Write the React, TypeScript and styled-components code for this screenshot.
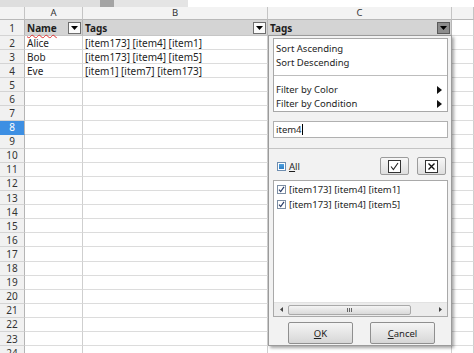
import React from 'react';
import styled, { createGlobalStyle } from 'styled-components';

const Global = createGlobalStyle`
  html, body { margin: 0; padding: 0; background: #fff; overflow: hidden; }
  body { font-family: "Noto Sans", "Open Sans", sans-serif; color: #1e1e1e; }
`;

const COLS = '25px 58px 185px 184px 1fr';
const ROW_H = 14.1;

const Page = styled.div`
  position: relative;
  width: 474px;
  height: 353px;
  overflow: hidden;
  background: #fff;
`;

const TopStrip = styled.div`
  display: flex;
  height: 7px;
`;

const StripSeg = styled.div<{ $w: number; $c: string }>`
  width: ${(p) => p.$w}px;
  background: ${(p) => p.$c};
`;

const Row = styled.div<{ $h: number }>`
  display: grid;
  grid-template-columns: ${COLS};
  height: ${(p) => p.$h}px;
  box-sizing: border-box;
`;

const ColHead = styled.div`
  background: #f3f3f3;
  border-right: 1px solid #c4c4c4;
  border-bottom: 1px solid #b9b9b9;
  font-size: 9.5px;
  color: #333;
  display: flex;
  align-items: center;
  justify-content: center;
  line-height: 1;
`;

const RowNum = styled.div<{ $sel?: boolean }>`
  background: ${(p) => (p.$sel ? '#3d8fe3' : '#f1f1f1')};
  color: ${(p) => (p.$sel ? '#fff' : '#333')};
  border-right: 1px solid #b5b5b5;
  border-bottom: 1px solid ${(p) => (p.$sel ? '#3d8fe3' : '#d4d4d4')};
  font-size: 10px;
  display: flex;
  align-items: center;
  justify-content: center;
  line-height: 1;
`;

const Cell = styled.div`
  border-right: 1px solid #cfcfcf;
  border-bottom: 1px solid #dcdcdc;
  font-size: 10px;
  padding-left: 2px;
  display: flex;
  align-items: center;
  white-space: nowrap;
  overflow: hidden;
  line-height: 1;
`;

const FilterCell = styled.div`
  background: #d4d4d4;
  border-right: 1px solid #b7b7b7;
  border-bottom: 1px solid #c6c6c6;
  font-size: 10px;
  font-weight: bold;
  padding-left: 2px;
  padding-right: 1px;
  display: flex;
  align-items: center;
  justify-content: space-between;
  line-height: 1;
`;

const Spell = styled.span`
  text-decoration: underline wavy #e03030;
  text-decoration-thickness: 1px;
  text-underline-offset: 2px;
`;

const DropBtn = styled.div<{ $on?: boolean }>`
  width: 13px;
  height: 12px;
  box-sizing: border-box;
  border: 1px solid ${(p) => (p.$on ? '#5a5a5a' : '#6e6e6e')};
  background: ${(p) => (p.$on ? '#8c8c8c' : '#fafafa')};
  display: flex;
  align-items: center;
  justify-content: center;
`;

const Popup = styled.div`
  position: absolute;
  left: 268px;
  top: 35px;
  width: 184px;
  height: 311px;
  box-sizing: border-box;
  background: #f2f2f2;
  border: 1px solid #9b9b9b;
  box-shadow: 2px 2px 3px rgba(0, 0, 0, 0.35);
  padding: 2px 3px 0 4px;
  display: flex;
  flex-direction: column;
  font-size: 9.5px;
`;

const MenuBox = styled.div`
  background: #fff;
  border: 1px solid #a8a8a8;
  height: 74px;
  box-sizing: border-box;
  display: flex;
  flex-direction: column;
  padding-top: 2px;
`;

const MenuItem = styled.div`
  height: 15px;
  display: flex;
  align-items: center;
  justify-content: space-between;
  padding: 0 5px 0 2px;
`;

const MenuSep = styled.div`
  height: 1px;
  background: #bdbdbd;
  margin: 6px 0 7px;
`;

const Search = styled.div`
  margin-top: 9px;
  height: 17px;
  box-sizing: border-box;
  background: #fff;
  border: 1px solid #b0b0b0;
  display: flex;
  align-items: center;
  padding-left: 2px;
`;

const Caret = styled.span`
  display: inline-block;
  width: 1px;
  height: 11px;
  background: #000;
`;

const HSep = styled.div`
  height: 1px;
  background: #c4c4c4;
  margin: 10px -3px 0 -4px;
`;

const AllRow = styled.div`
  margin-top: 8px;
  height: 18px;
  display: flex;
  align-items: center;
  gap: 6px;
`;

const AllLabel = styled.label`
  display: flex;
  align-items: center;
  gap: 3px;
  flex: 1;
  padding-left: 4px;
`;

const AllBox = styled.span`
  width: 9px;
  height: 9px;
  box-sizing: border-box;
  border: 1px solid #6f8eb0;
  background: #fff;
  padding: 1px;
  display: inline-flex;
  &::after {
    content: '';
    flex: 1;
    background: linear-gradient(#4fa1e0, #2f7ec4);
  }
`;

const ToolBtn = styled.button`
  width: 29px;
  height: 18px;
  box-sizing: border-box;
  border: 1px solid #9c9c9c;
  border-radius: 2px;
  background: linear-gradient(#f7f7f7, #dedede);
  padding: 0;
  display: flex;
  align-items: center;
  justify-content: center;
  margin-right: 2px;
`;

const ListBox = styled.div`
  margin-top: 5px;
  height: 137px;
  box-sizing: border-box;
  background: #fff;
  border: 1px solid #a9a9a9;
  display: flex;
  flex-direction: column;
`;

const ListItems = styled.div`
  flex: 1;
  padding: 1px 0 0 3px;
`;

const ListItem = styled.div`
  height: 15px;
  display: flex;
  align-items: center;
  gap: 3px;
  white-space: nowrap;
`;

const HScroll = styled.div`
  height: 13px;
  background: #ececec;
  border-top: 1px solid #e2e2e2;
  display: flex;
  align-items: center;
`;

const ScrollArrow = styled.div`
  width: 14px;
  display: flex;
  justify-content: center;
  align-items: center;
`;

const Thumb = styled.div`
  width: 123px;
  height: 10px;
  box-sizing: border-box;
  border: 1px solid #a9a9a9;
  border-radius: 2px;
  background: linear-gradient(#f4f4f4, #d9d9d9);
  display: flex;
  align-items: center;
  justify-content: center;
  gap: 1px;
`;

const Grip = styled.span`
  width: 1px;
  height: 4px;
  background: #666;
`;

const ScrollFill = styled.div`
  flex: 1;
`;

const ButtonRow = styled.div`
  margin-top: 5px;
  display: flex;
  gap: 17px;
  padding-left: 15px;
`;

const DlgBtn = styled.button`
  width: 65px;
  height: 22px;
  box-sizing: border-box;
  border: 1px solid #8f8f8f;
  border-radius: 2px;
  background: linear-gradient(#f5f5f5 0%, #e6e6e6 50%, #d6d6d6 100%);
  font-family: inherit;
  font-size: 9.5px;
  color: #1e1e1e;
  padding: 0;
`;

const U = styled.span`
  text-decoration: underline;
`;

const Arrow = () => (
  <svg width="5" height="8" viewBox="0 0 5 8">
    <path d="M0 0 L5 4 L0 8 Z" fill="#111" />
  </svg>
);

const DownTri = () => (
  <svg width="7" height="4" viewBox="0 0 7 4">
    <path d="M0 0 H7 L3.5 4 Z" fill="#000" />
  </svg>
);

const Check = () => (
  <svg width="9" height="9" viewBox="0 0 9 9">
    <rect x="0.5" y="0.5" width="8" height="8" fill="#fff" stroke="#7d8ea3" />
    <path d="M2 4.6 L3.7 6.6 L7 1.8" fill="none" stroke="#2a3e6a" strokeWidth="1.2" />
  </svg>
);

const CheckAllIcon = () => (
  <svg width="13" height="13" viewBox="0 0 13 13">
    <rect x="0.5" y="0.5" width="12" height="12" fill="#fff" stroke="#333" />
    <path d="M3 6.5 L5.4 9.5 L10 3" fill="none" stroke="#222" strokeWidth="1.1" />
  </svg>
);

const UncheckAllIcon = () => (
  <svg width="13" height="13" viewBox="0 0 13 13">
    <rect x="0.5" y="0.5" width="12" height="12" fill="#fff" stroke="#333" />
    <path d="M3.5 3.5 L9.5 9.5 M9.5 3.5 L3.5 9.5" fill="none" stroke="#111" strokeWidth="1.4" />
  </svg>
);

const SmallTri = ({ dir }: { dir: 'l' | 'r' }) => (
  <svg width="3" height="5" viewBox="0 0 3 5">
    <path d={dir === 'l' ? 'M3 0 L0 2.5 L3 5 Z' : 'M0 0 L3 2.5 L0 5 Z'} fill="#444" />
  </svg>
);

const data: [string, string, string][] = [
  ['Alice', '[item173] [item4] [item1]', ''],
  ['Bob', '[item173] [item4] [item5]', ''],
  ['Eve', '[item1] [item7] [item173]', ''],
];

export default function App() {
  const emptyRows = Array.from({ length: 20 }, (_, i) => i + 5);
  return (
    <Page>
      <Global />
      <TopStrip>
        <StripSeg $w={100} $c="#dedede" />
        <StripSeg $w={14} $c="#a4a4a4" />
        <StripSeg $w={74} $c="#e4e4e4" />
      </TopStrip>
      <Row $h={13}>
        <ColHead />
        <ColHead>A</ColHead>
        <ColHead>B</ColHead>
        <ColHead>C</ColHead>
        <ColHead />
      </Row>
      <Row $h={16}>
        <RowNum>1</RowNum>
        <FilterCell>
          <Spell>Name</Spell>
          <DropBtn>
            <DownTri />
          </DropBtn>
        </FilterCell>
        <FilterCell>
          Tags
          <DropBtn>
            <DownTri />
          </DropBtn>
        </FilterCell>
        <FilterCell>
          Tags
          <DropBtn $on>
            <DownTri />
          </DropBtn>
        </FilterCell>
        <Cell />
      </Row>
      {data.map((d, i) => (
        <Row $h={ROW_H} key={d[0]}>
          <RowNum>{i + 2}</RowNum>
          <Cell>{d[0]}</Cell>
          <Cell>{d[1]}</Cell>
          <Cell>{d[2]}</Cell>
          <Cell />
        </Row>
      ))}
      {emptyRows.map((n) => (
        <Row $h={ROW_H} key={n}>
          <RowNum $sel={n === 8}>{n}</RowNum>
          <Cell />
          <Cell />
          <Cell />
          <Cell />
        </Row>
      ))}

      <Popup>
        <MenuBox>
          <MenuItem>Sort Ascending</MenuItem>
          <MenuItem>Sort Descending</MenuItem>
          <MenuSep />
          <MenuItem>
            Filter by Color
            <Arrow />
          </MenuItem>
          <MenuItem>
            Filter by Condition
            <Arrow />
          </MenuItem>
        </MenuBox>
        <Search>
          item4
          <Caret />
        </Search>
        <HSep />
        <AllRow>
          <AllLabel>
            <AllBox />
            <span>
              <U>A</U>ll
            </span>
          </AllLabel>
          <ToolBtn>
            <CheckAllIcon />
          </ToolBtn>
          <ToolBtn>
            <UncheckAllIcon />
          </ToolBtn>
        </AllRow>
        <ListBox>
          <ListItems>
            <ListItem>
              <Check />
              [item173] [item4] [item1]
            </ListItem>
            <ListItem>
              <Check />
              [item173] [item4] [item5]
            </ListItem>
          </ListItems>
          <HScroll>
            <ScrollArrow>
              <SmallTri dir="l" />
            </ScrollArrow>
            <Thumb>
              <Grip />
              <Grip />
              <Grip />
            </Thumb>
            <ScrollFill />
            <ScrollArrow>
              <SmallTri dir="r" />
            </ScrollArrow>
          </HScroll>
        </ListBox>
        <ButtonRow>
          <DlgBtn>
            <U>O</U>K
          </DlgBtn>
          <DlgBtn>
            <U>C</U>ancel
          </DlgBtn>
        </ButtonRow>
      </Popup>
    </Page>
  );
}
